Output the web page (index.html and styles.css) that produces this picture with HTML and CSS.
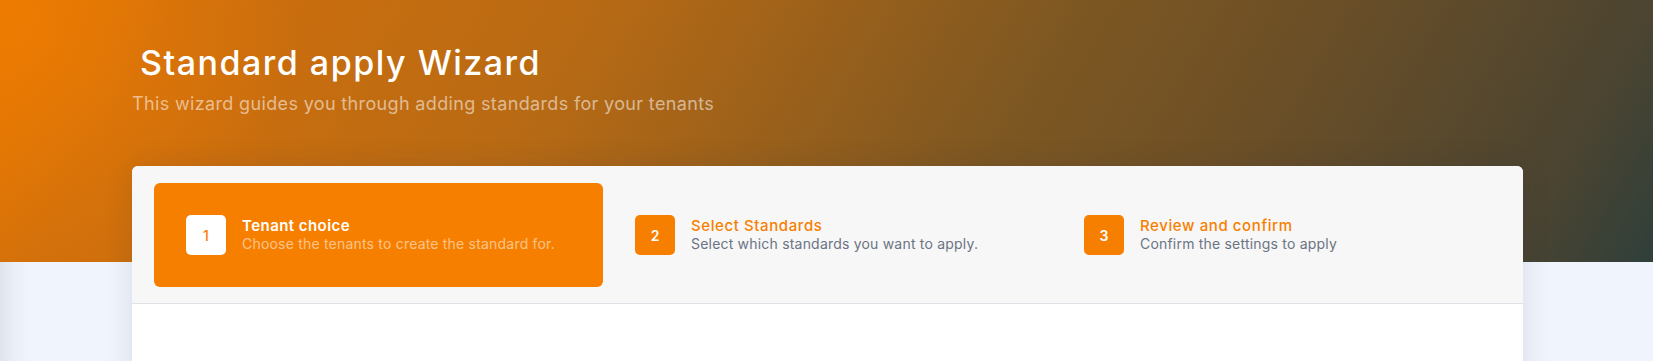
FILE: index.html
```html
<!DOCTYPE html>
<html lang="en">
<head>
<meta charset="utf-8">
<title>Standard apply Wizard</title>
<link rel="stylesheet" href="styles.css">
</head>
<body>
  <header class="hero">
    <h1 class="hero-title">Standard apply Wizard</h1>
    <p class="hero-sub">This wizard guides you through adding standards for your tenants</p>
  </header>
  <main class="content">
    <section class="card">
      <div class="card-header">
        <div class="steps">
          <div class="step active">
            <div class="step-num">1</div>
            <div class="step-text">
              <div class="step-title">Tenant choice</div>
              <div class="step-desc">Choose the tenants to create the standard for.</div>
            </div>
          </div>
          <div class="step">
            <div class="step-num">2</div>
            <div class="step-text">
              <div class="step-title">Select Standards</div>
              <div class="step-desc">Select which standards you want to apply.</div>
            </div>
          </div>
          <div class="step">
            <div class="step-num">3</div>
            <div class="step-text">
              <div class="step-title">Review and confirm</div>
              <div class="step-desc">Confirm the settings to apply</div>
            </div>
          </div>
        </div>
      </div>
      <div class="card-body"></div>
    </section>
  </main>
</body>
</html>
```

FILE: styles.css
```css
* { box-sizing: border-box; }

html, body { height: 100%; }

body {
  margin: 0;
  font-family: Inter, "Noto Sans", "Liberation Sans", sans-serif;
  background: linear-gradient(to right, #dfe3eb 0px, #eaeef6 14px, #f0f4fc 30px, #f0f4fc 100%);
  overflow: hidden;
}

.hero {
  height: 262px;
  padding: 43px 130px 0 132px;
  background:
    radial-gradient(circle at 40px 40px, rgba(245, 128, 0, 0.5) 0, rgba(245, 128, 0, 0) 260px),
    linear-gradient(120deg, #e87800 0%, #d06f0c 10%, #b86a14 33%, #7d5722 60%, #6e5026 72%, #4b4431 92%, #2f3f3a 100%);
}

.hero-title {
  margin: 0;
  padding-left: 8px;
  font-size: 34px;
  line-height: 1.2;
  font-weight: 500;
  letter-spacing: 1.5px;
  color: #ffffff;
}

.hero-sub {
  margin: 9px 0 0;
  font-size: 18px;
  line-height: 1.2;
  font-weight: 400;
  letter-spacing: 0.35px;
  color: rgba(255, 255, 255, 0.55);
}

.content {
  padding: 0 130px 0 132px;
  margin-top: -96px;
}

.card {
  background: #ffffff;
  border-radius: 6px;
  box-shadow: 0 0 28px rgba(30, 40, 70, 0.12);
  overflow: hidden;
}

.card-header {
  background: #f7f7f7;
  padding: 17px 22px 16px;
  border-bottom: 1px solid #dfe1e7;
}

.steps {
  display: grid;
  grid-template-columns: repeat(3, 1fr);
}

.step {
  height: 104px;
  display: flex;
  align-items: center;
  gap: 16px;
  padding-left: 32px;
  border-radius: 6px;
}

.step.active { background: #f77f00; }

.step-num {
  width: 40px;
  height: 40px;
  flex: none;
  display: flex;
  align-items: center;
  justify-content: center;
  border-radius: 5px;
  background: #f77f00;
  color: #ffffff;
  font-size: 14px;
  font-weight: 600;
}

.step.active .step-num {
  background: #ffffff;
  color: #f77f00;
  font-weight: 500;
}

.step-title {
  font-size: 15px;
  line-height: 18px;
  font-weight: 500;
  letter-spacing: 0.6px;
  color: #f77f00;
}

.step.active .step-title {
  color: #ffffff;
  font-weight: 600;
  letter-spacing: 0.45px;
}

.step-desc {
  font-size: 14px;
  line-height: 18px;
  letter-spacing: 0.2px;
  color: #6b7484;
}

.step.active .step-desc { color: rgba(255, 255, 255, 0.55); }

.card-body {
  height: 300px;
  background: #ffffff;
}
```
